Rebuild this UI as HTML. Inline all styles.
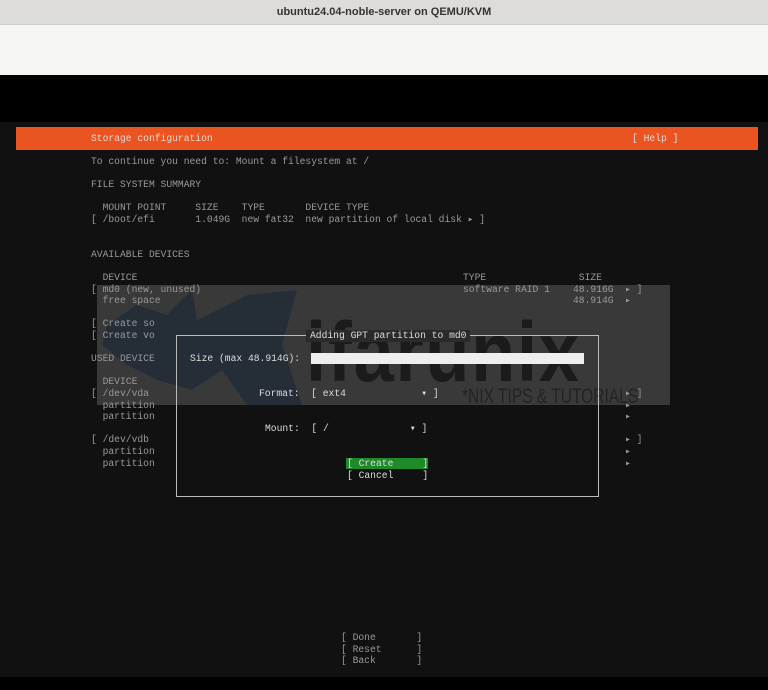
<!DOCTYPE html>
<html><head><meta charset="utf-8"><style>
*{margin:0;padding:0;box-sizing:border-box}
body{width:768px;height:690px;background:#000;position:relative;overflow:hidden;font-family:"Liberation Mono",monospace}
.tb{position:absolute;left:0;top:0;width:768px;height:25px;background:#dedcda;border-bottom:1px solid #cfcdcb;font-family:"Liberation Sans",sans-serif;font-size:11px;color:#333;text-align:center;line-height:25px;font-weight:bold}
.wh{position:absolute;left:0;top:25px;width:768px;height:50px;background:#f5f5f4}
.term{position:absolute;left:0;top:122px;width:768px;height:555px;background:#111}
.bar{position:absolute;left:16px;top:127px;width:742px;height:23px;background:#e95420}
.t{position:absolute;white-space:pre;font-size:9.67px;line-height:11.6px;color:#999}
.w{color:#ddd}
.wm{position:absolute;left:97px;top:285px;width:573px;height:120px;background:rgba(140,140,140,0.33)}
.dlg{position:absolute;left:176px;top:335px;width:423px;height:162px;border:1px solid #bbb;background:#111}
.wml{position:absolute;font-family:"Liberation Sans",sans-serif;font-weight:bold;white-space:nowrap;transform-origin:0 0}
</style></head><body>
<div class="tb">ubuntu24.04-noble-server on QEMU/KVM</div>
<div class="wh"></div>
<div class="term"></div>
<div class="bar"></div>
<div class="t w" style="left:91px;top:133px">Storage configuration</div>
<div class="t w" style="left:632px;top:133px">[ Help ]</div>
<div class="t" style="left:91px;top:156px">To continue you need to: Mount a filesystem at /</div>
<div class="t" style="left:91px;top:179px">FILE SYSTEM SUMMARY</div>
<div class="t" style="left:91px;top:202px">  MOUNT POINT     SIZE    TYPE       DEVICE TYPE
[ /boot/efi       1.049G  new fat32  new partition of local disk ▸ ]</div>
<div class="t" style="left:91px;top:249px">AVAILABLE DEVICES</div>
<div class="wm"></div>
<div class="dlg"></div>
<div class="wm" style="left:176px;width:423px;top:335px;height:70px"></div>
<svg style="position:absolute;left:97px;top:285px" width="220" height="120"><path d="M10 40 L40 20 L70 30 L95 5 L100 35 L150 10 L200 5 L185 60 L205 120 L150 120 L125 85 L95 105 L60 95 L30 80 L5 60 Z" fill="rgba(25,40,55,0.6)"/></svg>
<div class="wml" style="left:306px;top:304px;font-size:84px;letter-spacing:2px;color:rgba(18,18,18,0.75);transform:scaleX(0.86)">ifarunix</div>
<div class="wml" style="left:462px;top:385px;font-size:21px;font-weight:normal;color:rgba(25,25,25,0.7);transform:scaleX(0.74)">*NIX TIPS &amp; TUTORIALS</div>
<div class="t" style="left:91px;top:272px">  DEVICE
[ md0 (new, unused)
  free space

[ Create so
[ Create vo

USED DEVICE

  DEVICE
[ /dev/vda
  partition
  partition

[ /dev/vdb
  partition
  partition</div>
<div class="t" style="left:463px;top:272px">TYPE
software RAID 1</div>
<div class="t" style="left:573px;top:272px"> SIZE
48.916G
48.914G</div>
<div class="t" style="left:625px;top:283.6px">▸ ]
▸







▸ ]
▸
▸

▸ ]
▸
▸</div>
<div style="position:absolute;left:176px;top:335px;width:423px;height:162px;border:1px solid #bbb"></div>
<div class="t w" style="left:306px;top:330px;background:#2a2a2a;padding:0 4px">Adding GPT partition to md0</div>
<div class="t w" style="left:190px;top:353px">Size (max 48.914G):</div>
<div style="position:absolute;left:311px;top:353px;width:273px;height:11px;background:#eee"></div>
<div class="t w" style="left:259px;top:388px">Format:  [ ext4             ▾ ]</div>
<div class="t w" style="left:265px;top:423px">Mount:  [ /              ▾ ]</div>
<div style="position:absolute;left:346px;top:458px;width:82px;height:11px;background:#1f8a2a"></div>
<div class="t w" style="left:347px;top:458px">[ Create     ]
[ Cancel     ]</div>
<div class="t" style="left:341px;top:632px">[ Done       ]
[ Reset      ]
[ Back       ]</div>
</body></html>
